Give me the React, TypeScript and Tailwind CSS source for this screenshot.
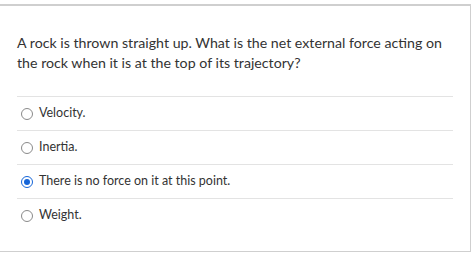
import React from 'react';

const options = [
  { label: 'Velocity.', checked: false },
  { label: 'Inertia.', checked: false },
  { label: 'There is no force on it at this point.', checked: true },
  { label: 'Weight.', checked: false },
];

function Radio({ checked }: { checked: boolean }) {
  if (checked) {
    return (
      <span className="flex h-[12px] w-[12px] items-center justify-center rounded-full border border-[#1565d8] bg-white">
        <span className="h-[6px] w-[6px] rounded-full bg-[#1565d8]" />
      </span>
    );
  }
  return <span className="h-[12px] w-[12px] rounded-full border border-[#8a8a8a] bg-white" />;
}

export default function App() {
  return (
    <div className="h-[255px] w-[474px] bg-white pt-[4px] font-['Lato',sans-serif] text-[#333333]">
      <div className="h-[248px] w-[471px] border-t-2 border-r border-b border-[#cfcfcf] pl-[17px] pr-[17px] pt-[27px]">
        <p className="text-[14.2px] leading-[20px]">
          A rock is thrown straight up. What is the net external force acting on the rock when it is at the top of its trajectory?
        </p>
        <div className="mt-[23px]">
          {options.map((o) => (
            <label key={o.label} className="flex h-[34px] items-center gap-[6px] border-t border-[#e3e3e3] pl-[4px] text-[12.5px]">
              <Radio checked={o.checked} />
              <span>{o.label}</span>
            </label>
          ))}
        </div>
      </div>
    </div>
  );
}
